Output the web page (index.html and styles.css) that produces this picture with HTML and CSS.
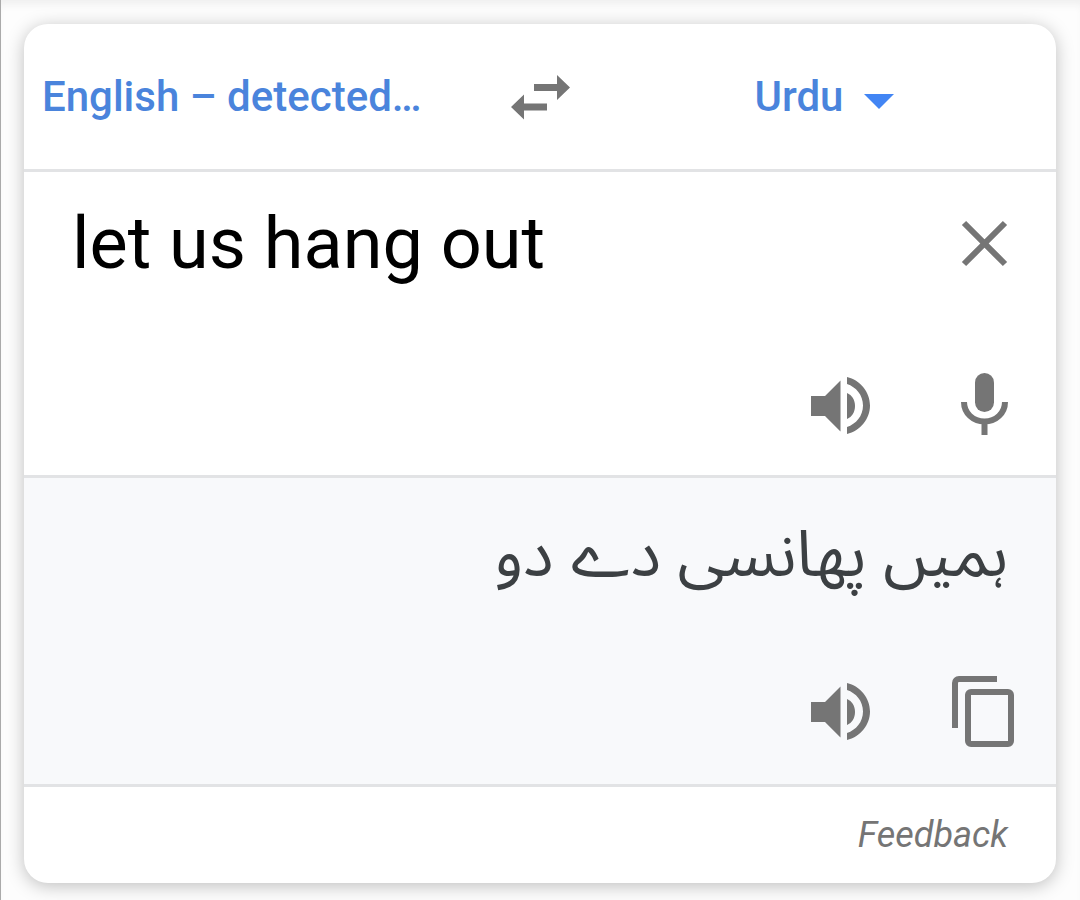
FILE: index.html
```
<!DOCTYPE html>
<html lang="en">
<head>
  <meta charset="UTF-8" />
  <title>Translate</title>
  <meta name="viewport" content="width=device-width, initial-scale=1.0" />
  <link rel="stylesheet" href="styles.css">
</head>
<body>
  <main class="card">
    <header class="languages">
      <button type="button" class="lang-source">English – detected…</button>
      <button type="button" class="icon-btn" aria-label="Swap languages">
        <svg viewBox="0 0 72 72">
          <path d="M30 23h23v-9l13 12.500-13 12.500V30H30z" />
          <path d="M43 42.500H20v-9L7 46l13 12.500v-9h23z" />
        </svg>
      </button>
      <div class="lang-target">
        <select aria-label="Target language">
          <option>Urdu</option>
        </select>
        <svg class="caret" viewBox="0 0 30 15"><path d="M0 0h30L15 15z" /></svg>
      </div>
    </header>

    <section class="panel source">
      <div class="text-row">
        <input type="text" class="source-text" aria-label="Text to translate" value="let us hang out" />
        <button type="button" class="icon-btn" aria-label="Clear">
          <svg viewBox="0 0 72 72"><path class="line" d="M16 15l41 41M57 15L16 56" /></svg>
        </button>
      </div>
      <div class="actions">
        <button type="button" class="icon-btn" aria-label="Listen to source">
          <svg viewBox="0 0 72 72">
            <path d="M7 26h14l15.500-15.500v51L21 46H7z" />
            <path d="M43 23c5 2 8 7 8 13s-3 11-8 13z" />
            <path d="M43 7c13 3 23 15 23 28.500S56 61 43 64v-7c9-3 16-11 16-21.500S52 17 43 14z" />
          </svg>
        </button>
        <button type="button" class="icon-btn" aria-label="Speak">
          <svg viewBox="0 0 72 72">
            <rect x="27" y="3" width="19" height="39" rx="9.500" />
            <path class="line" d="M16 32c0 11 9 19.500 20.500 19.500S57 43 57 32M36.500 52v13" />
          </svg>
        </button>
      </div>
    </section>

    <section class="panel result">
      <p class="result-text" lang="ur" dir="rtl">ہمیں پھانسی دے دو</p>
      <div class="actions">
        <button type="button" class="icon-btn" aria-label="Listen to translation">
          <svg viewBox="0 0 72 72">
            <path d="M7 26h14l15.500-15.500v51L21 46H7z" />
            <path d="M43 23c5 2 8 7 8 13s-3 11-8 13z" />
            <path d="M43 7c13 3 23 15 23 28.500S56 61 43 64v-7c9-3 16-11 16-21.500S52 17 43 14z" />
          </svg>
        </button>
        <button type="button" class="icon-btn" aria-label="Copy">
          <svg viewBox="0 0 72 72">
            <path class="line" d="M7 52V7a4 4 0 0 1 4-4h38" />
            <rect class="line" x="20" y="16" width="43" height="52" rx="3" />
          </svg>
        </button>
      </div>
    </section>

    <footer class="footer">
      <a href="#">Feedback</a>
    </footer>
  </main>
</body>
</html>
```
FILE: styles.css
```
:root {
  --blue: #4a84dc;
  --grey: #757575;
  --line: #e2e3e5;
}

* {
  box-sizing: border-box;
}

body {
  margin: 0;
  min-height: 100vh;
  padding: 24px 24px 17px 23px;
  border-left: 1px solid #aaa;
  background: #fdfdfd;
  box-shadow: inset 0 8px 8px -4px #eee;
  font-family: Roboto, sans-serif;
}

.card {
  background: #fff;
  border-radius: 24px;
  box-shadow: 0 3px 18px rgba(0, 0, 0, 0.25);
  overflow: hidden;
}

button, select, input {
  margin: 0;
  padding: 0;
  border: none;
  background: none;
  font-family: inherit;
  outline: none;
}

button {
  cursor: pointer;
}

.languages {
  display: grid;
  grid-template-columns: 1fr 104px 1fr;
  align-items: center;
  justify-items: center;
  min-height: 148px;
  border-bottom: 3px solid var(--line);
}

.lang-source, .lang-target select {
  font-size: 42px;
  font-weight: 500;
  line-height: 48px;
  color: var(--blue);
}

.lang-source {
  justify-self: start;
  padding-left: 18px;
  white-space: nowrap;
}

.lang-target {
  display: flex;
  align-items: center;
  gap: 20px;
}

.lang-target select {
  appearance: none;
}

.caret {
  width: 30px;
  height: 15px;
  margin-top: 10px;
  fill: #4285f4;
}

.icon-btn {
  flex: none;
  width: 72px;
  height: 72px;
}

.icon-btn svg {
  display: block;
  fill: var(--grey);
}

.icon-btn .line {
  fill: none;
  stroke: var(--grey);
  stroke-width: 6;
}

.panel {
  display: flex;
  flex-direction: column;
  justify-content: space-between;
  padding: 36px;
  border-bottom: 3px solid var(--line);
}

.source {
  min-height: 306px;
  padding-top: 30px;
  padding-bottom: 33px;
}

.result {
  min-height: 309px;
  background: #f8f9fb;
}

.text-row {
  display: flex;
  align-items: center;
}

.source-text {
  flex: 1;
  min-width: 0;
  height: 84px;
  padding-left: 12px;
  font-size: 72px;
  line-height: 84px;
  color: #000;
}

.result-text {
  margin: 0;
  padding-right: 12px;
  font-family: "Noto Sans Arabic", "DejaVu Sans", sans-serif;
  font-size: 64px;
  line-height: 84px;
  color: #3c4043;
}

.actions {
  display: flex;
  justify-content: flex-end;
  gap: 72px;
}

.footer {
  padding: 24px 48px;
  text-align: right;
}

.footer a {
  font-size: 36px;
  font-style: italic;
  line-height: 48px;
  color: var(--grey);
  text-decoration: none;
}
```
